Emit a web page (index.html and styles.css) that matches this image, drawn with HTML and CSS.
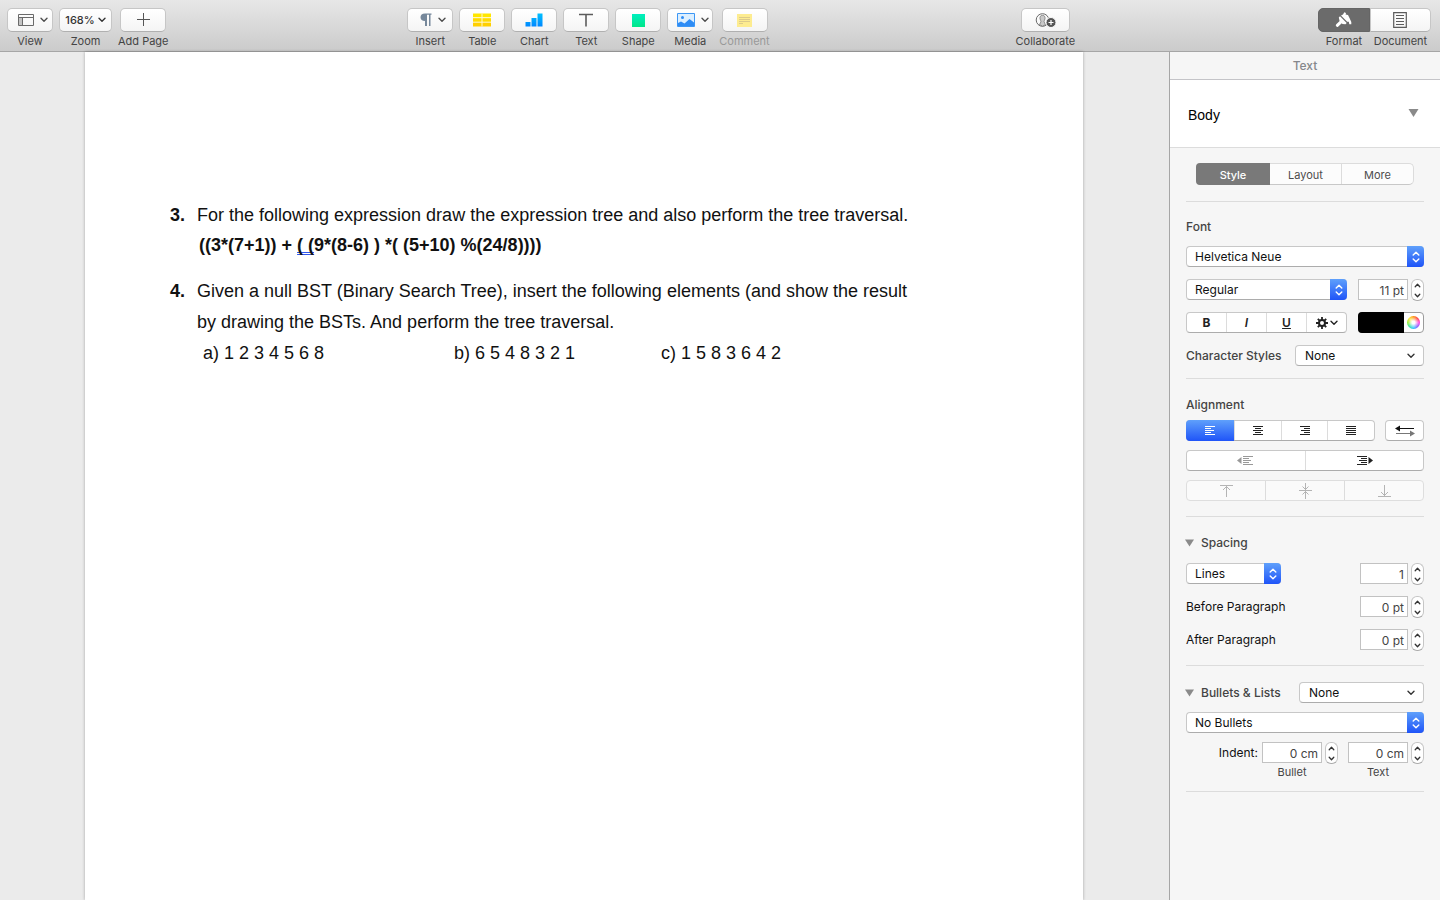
FILE: index.html
```html
<!DOCTYPE html>
<html lang="en">
<head>
    <meta charset="UTF-8">
    <meta name="viewport" content="width=device-width, initial-scale=1.0">
    <title>Document Editor</title>
    <link rel="stylesheet" href="styles.css">
</head>
<body>

<!-- shared icons -->
<svg class="symbols" aria-hidden="true">
    <symbol id="chevron" viewBox="0 0 8 6"><path d="M1 1.3l3 3 3-3" fill="none" stroke="currentColor" stroke-width="1.4" stroke-linecap="round" stroke-linejoin="round"/></symbol>
    <symbol id="updown" viewBox="0 0 8 12"><path d="M1.2 4L4 1.2 6.800 4M1.2 8L4 10.8 6.800 8" fill="none" stroke="currentColor" stroke-width="1.4" stroke-linecap="round" stroke-linejoin="round"/></symbol>
    <symbol id="step-up" viewBox="0 0 7 5"><path d="M1.200 3.700l2.300-2.400 2.300 2.400" fill="none" stroke="currentColor" stroke-width="1.3" stroke-linecap="round" stroke-linejoin="round"/></symbol>
    <symbol id="step-down" viewBox="0 0 7 5"><path d="M1.200 1.300l2.300 2.400 2.300-2.400" fill="none" stroke="currentColor" stroke-width="1.3" stroke-linecap="round" stroke-linejoin="round"/></symbol>
    <symbol id="triangle" viewBox="0 0 10 8"><path d="M0 0h10L5 8z" fill="currentColor"/></symbol>
</svg>

<header class="toolbar">
    <div class="tools">
        <div class="tool">
            <button class="tool-button with-menu" id="view" aria-labelledby="view-label">
                <svg width="16" height="12" viewBox="0 0 16 12"><path d="M1 3.500h4V11H1z" fill="#c4c4c4"/><path d="M.5.500h15v11H.5zM.5 3.500h15M4.500 3.500v8" fill="none" stroke="#6a6a6a"/></svg>
                <svg class="chevron"><use href="#chevron"/></svg>
            </button>
            <label for="view" id="view-label">View</label>
        </div>
        <div class="tool">
            <button class="tool-button zoom" id="zoom">168% <svg class="chevron"><use href="#chevron"/></svg></button>
            <label for="zoom">Zoom</label>
        </div>
        <div class="tool">
            <button class="tool-button" id="add" aria-labelledby="add-label">
                <svg width="14" height="14" viewBox="0 0 14 14"><path d="M7.500 0v13M1 6.500h13" stroke="#555"/></svg>
            </button>
            <label for="add" id="add-label">Add Page</label>
        </div>
    </div>

    <div class="tools insert-tools">
        <div class="tool">
            <button class="tool-button with-menu" id="insert">
                <svg width="12" height="14" viewBox="0 0 12 14"><path d="M5 8C2 8 .5 6.300.5 4.200S2 .500 5 .500h6.500v1.300H10.500V13H9V1.800H7V13H5z" fill="#76889b"/></svg>
                <svg class="chevron"><use href="#chevron"/></svg>
            </button>
            <label for="insert">Insert</label>
        </div>
        <div class="tool">
            <button class="tool-button" id="table">
                <svg width="18" height="14" viewBox="0 0 18 14"><path d="M0 .500h18v4H0z" fill="#ffe600"/><path d="M0 5h18v4H0z" fill="#ffdb00"/><path d="M0 9h18v4.500H0z" fill="#ffcf00"/><path d="M9 .500v13M0 4.700h18M0 9.200h18" stroke="#fff8cf"/></svg>
            </button>
            <label for="table">Table</label>
        </div>
        <div class="tool">
            <button class="tool-button" id="chart">
                <svg width="18" height="14" viewBox="0 0 18 14">
                    <linearGradient id="bars" gradientUnits="userSpaceOnUse" x1="0" y1="0" x2="0" y2="14"><stop stop-color="#00c3ff"/><stop offset="1" stop-color="#0084ff"/></linearGradient>
                    <path d="M.5 9h5v4.500h-5zM6.500 5h5v8.500h-5zM12.500 .500h5v13h-5z" fill="url(#bars)"/>
                </svg>
            </button>
            <label for="chart">Chart</label>
        </div>
        <div class="tool">
            <button class="tool-button" id="text">
                <svg width="14" height="14" viewBox="0 0 14 14"><path d="M0 1.500h14M7 1.500v12" stroke="#5c5c5c" stroke-width="1.600"/></svg>
            </button>
            <label for="text">Text</label>
        </div>
        <div class="tool">
            <button class="tool-button" id="shape">
                <svg width="13" height="13" viewBox="0 0 13 13">
                    <linearGradient id="green" x1="0" y1="0" x2="0" y2="1"><stop stop-color="#00efc0"/><stop offset="1" stop-color="#00e688"/></linearGradient>
                    <path d="M0 0h13v13H0z" fill="url(#green)"/>
                </svg>
            </button>
            <label for="shape">Shape</label>
        </div>
        <div class="tool">
            <button class="tool-button with-menu" id="media">
                <svg width="18" height="14" viewBox="0 0 18 14"><path d="M.5.500h17v13H.5z" fill="#dcefff" stroke="#3d97f5"/><path d="M1 10l3-1.500 3.500 2L12.500 6 17 9.500V13H1z" fill="#2e8cf5"/><circle cx="5.500" cy="4.500" r="1.500" fill="#2e8cf5"/></svg>
                <svg class="chevron"><use href="#chevron"/></svg>
            </button>
            <label for="media">Media</label>
        </div>
        <div class="tool disabled">
            <button class="tool-button" id="comment" disabled>
                <svg width="15" height="13" viewBox="0 0 15 13"><path d="M0 0h15v13H0z" fill="#fdec90"/><path d="M2 3.500h11M2 5.500h11M2 7.500h11M2 9.500h4" stroke="#dccb8c"/></svg>
            </button>
            <label for="comment">Comment</label>
        </div>
    </div>

    <div class="tools share-tools">
        <div class="tool">
            <button class="tool-button wide" id="collaborate">
                <svg width="21" height="15" viewBox="0 0 21 15">
                    <circle cx="7.500" cy="7" r="6.300" fill="none" stroke="#6a6a6a"/>
                    <path d="M7.500 2.300C5.500 2.300 4.700 3.800 5 5.800c.2 1.400 1 1.700 1 3L4.500 11.500 7.500 13.200l3-1.700L9 8.800c0-1.300.8-1.600 1-3 .3-2-.5-3.500-2.500-3.500z" fill="#c9c9c9" stroke="#777" stroke-width=".8"/>
                    <circle cx="16" cy="9.500" r="5" fill="#555" stroke="#fafafa"/>
                    <path d="M16 7v5M13.500 9.500h5" stroke="#fff" stroke-width="1.200"/>
                </svg>
            </button>
            <label for="collaborate">Collaborate</label>
        </div>
    </div>

    <div class="tools joined">
        <div class="tool">
            <button class="tool-button active" id="format">
                <svg width="17" height="16" viewBox="0 0 17 16"><path d="M2.300 13.300L6 9.800" stroke="#fff" stroke-width="3" stroke-linecap="round"/><path d="M3.800 5.500L5 4.300l6.700 6.700-1.200 1.200-3-.2L4.600 9zM6 3.600L8 2.500 9.300.300l1.700.7L10.600 2.500l2.400.5 1.500 3L16.300 10v2.200h-2L13.800 9.800h-1.600z" fill="#fff"/></svg>
            </button>
            <label for="format">Format</label>
        </div>
        <div class="tool">
            <button class="tool-button" id="document">
                <svg width="14" height="16" viewBox="0 0 14 16"><path d="M.7.700h12.600v14.600H.7z" fill="none" stroke="#5c5c5c" stroke-width="1.200"/><path d="M3 3.500h8M3 6.500h8M3 9.500h8M3 12.500h8" stroke="#5c5c5c"/></svg>
            </button>
            <label for="document">Document</label>
        </div>
    </div>
</header>

<div class="workspace">
    <main class="canvas">
        <article class="page">
            <section class="question">
                <b>3.</b>
                <div>
                    <p>For the following expression draw the expression tree and also perform the tree traversal.</p>
                    <p class="expression">((3*(7+1)) + <span class="grammar">( (</span>9*(8-6) ) *( (5+10) %(24/8))))</p>
                </div>
            </section>
            <section class="question">
                <b>4.</b>
                <div>
                    <p>Given a null BST (Binary Search Tree), insert the following elements (and show the result<br>by drawing the BSTs. And perform the tree traversal.</p>
                    <p class="options"><span>a) 1 2 3 4 5 6 8</span><span>b) 6 5 4 8 3 2 1</span><span>c) 1 5 8 3 6 4 2</span></p>
                </div>
            </section>
        </article>
    </main>

    <aside class="sidebar">
        <h1 class="sidebar-title">Text</h1>
        <button class="paragraph-style">Body <svg width="11" height="8"><use href="#triangle"/></svg></button>

        <div class="panel">
            <div class="tabs">
                <button class="active">Style</button>
                <button>Layout</button>
                <button>More</button>
            </div>

            <section class="group font">
                <h2>Font</h2>
                <div class="row">
                    <span class="popup fill"><select aria-label="Font family"><option>Helvetica Neue</option></select><i><svg><use href="#updown"/></svg></i></span>
                </div>
                <div class="row">
                    <span class="popup fill"><select aria-label="Typeface"><option>Regular</option></select><i><svg><use href="#updown"/></svg></i></span>
                    <span class="number size">
                        <input type="text" value="11 pt" aria-label="Font size">
                        <span class="stepper"><button aria-label="Increase"><svg><use href="#step-up"/></svg></button><button aria-label="Decrease"><svg><use href="#step-down"/></svg></button></span>
                    </span>
                </div>
                <div class="row">
                    <div class="segments fill">
                        <button class="bold">B</button>
                        <button class="italic">I</button>
                        <button class="underline">U</button>
                        <button aria-label="Advanced options">
                            <svg width="14" height="12" viewBox="-1 0 14 12"><circle cx="6" cy="6" r="3" fill="none" stroke="#222" stroke-width="2"/><path d="M6 0v3M6 9v3M0 6h3M9 6h3M1.800 1.800l2 2M8.200 8.200l2 2M10.200 1.800l-2 2M3.800 8.200l-2 2" stroke="#222" stroke-width="1.800"/></svg>
                            <svg class="chevron"><use href="#chevron"/></svg>
                        </button>
                    </div>
                    <div class="color-well">
                        <button class="swatch" aria-label="Text color"></button>
                        <button class="wheel" aria-label="Color wheel"><i></i></button>
                    </div>
                </div>
                <div class="row">
                    <label class="strong" for="char-style">Character Styles</label>
                    <span class="dropdown char-style"><select id="char-style"><option>None</option></select><svg class="chevron"><use href="#chevron"/></svg></span>
                </div>
            </section>

            <section class="group tight alignment">
                <h2>Alignment</h2>
                <div class="row">
                    <div class="segments fill align">
                        <button class="active" aria-label="Align left"><svg width="12" height="10" viewBox="0 0 12 10"><path d="M1 .500h10M1 2.500h6M1 4.500h9M1 6.500h6M1 8.500h10" stroke="currentColor"/></svg></button>
                        <button aria-label="Align center"><svg width="12" height="10" viewBox="0 0 12 10"><path d="M1 .500h10M3 2.500h6M1 4.500h10M3 6.500h6M1 8.500h10" stroke="currentColor"/></svg></button>
                        <button aria-label="Align right"><svg width="12" height="10" viewBox="0 0 12 10"><path d="M1 .500h10M5 2.500h6M2 4.500h9M5 6.500h6M1 8.500h10" stroke="currentColor"/></svg></button>
                        <button aria-label="Justify"><svg width="12" height="10" viewBox="0 0 12 10"><path d="M1 .500h10M1 2.500h10M1 4.500h10M1 6.500h10M1 8.500h10" stroke="currentColor"/></svg></button>
                    </div>
                    <div class="segments direction">
                        <button aria-label="Text direction"><svg width="20" height="12" viewBox="0 0 20 12"><path d="M3 3.500h16" stroke="#111"/><path d="M0 3.500l5-3v6z" fill="#111"/><path d="M1 8.500h16" stroke="#777"/><path d="M20 8.500l-5-3v6z" fill="#777"/></svg></button>
                    </div>
                </div>
                <div class="row">
                    <div class="segments fill">
                        <button aria-label="Decrease indent" class="dim"><svg width="18" height="10" viewBox="0 0 18 10"><path d="M6 .500h10M6 2.500h6M6 4.500h8M6 6.500h6M6 8.500h10" stroke="currentColor"/><path d="M4.500 1v7L0 4.500z" fill="currentColor"/></svg></button>
                        <button aria-label="Increase indent"><svg width="18" height="10" viewBox="0 0 18 10"><path d="M2 .500h10M6 2.500h6M4 4.500h8M6 6.500h6M2 8.500h10" stroke="currentColor"/><path d="M13.500 1v7L18 4.500z" fill="currentColor"/></svg></button>
                    </div>
                </div>
                <div class="row">
                    <div class="segments fill off">
                        <button disabled aria-label="Align top"><svg width="13" height="12" viewBox="0 0 13 12"><path d="M0 .500h13M6.500 1v11M3 5l3.500-3.500L10 5" fill="none" stroke="currentColor"/></svg></button>
                        <button disabled aria-label="Align middle"><svg width="13" height="16" viewBox="0 0 13 16"><path d="M0 7.500h13M6.500 0v16M3.500 3.500l3 3 3-3M3.500 11.500l3-3 3 3" fill="none" stroke="currentColor"/></svg></button>
                        <button disabled aria-label="Align bottom"><svg width="13" height="12" viewBox="0 0 13 12"><path d="M0 11.500h13M6.500 0v11M3 7l3.500 3.500L10 7" fill="none" stroke="currentColor"/></svg></button>
                    </div>
                </div>
            </section>

            <section class="group spacing">
                <h2><svg class="disclosure"><use href="#triangle"/></svg>Spacing</h2>
                <div class="row">
                    <span class="popup lines"><select aria-label="Line spacing"><option>Lines</option></select><i><svg><use href="#updown"/></svg></i></span>
                    <span class="number">
                        <input type="text" value="1" aria-label="Spacing value">
                        <span class="stepper"><button aria-label="Increase"><svg><use href="#step-up"/></svg></button><button aria-label="Decrease"><svg><use href="#step-down"/></svg></button></span>
                    </span>
                </div>
                <div class="row">
                    <label for="before">Before Paragraph</label>
                    <span class="number">
                        <input type="text" value="0 pt" id="before">
                        <span class="stepper"><button aria-label="Increase"><svg><use href="#step-up"/></svg></button><button aria-label="Decrease"><svg><use href="#step-down"/></svg></button></span>
                    </span>
                </div>
                <div class="row">
                    <label for="after">After Paragraph</label>
                    <span class="number">
                        <input type="text" value="0 pt" id="after">
                        <span class="stepper"><button aria-label="Increase"><svg><use href="#step-up"/></svg></button><button aria-label="Decrease"><svg><use href="#step-down"/></svg></button></span>
                    </span>
                </div>
            </section>

            <section class="group tight bullets">
                <div class="row">
                    <h2><svg class="disclosure"><use href="#triangle"/></svg><label for="list-style">Bullets &amp; Lists</label></h2>
                    <span class="dropdown list-style"><select id="list-style"><option>None</option></select><svg class="chevron"><use href="#chevron"/></svg></span>
                </div>
                <div class="row">
                    <span class="popup fill"><select aria-label="Bullet type"><option>No Bullets</option></select><i><svg><use href="#updown"/></svg></i></span>
                </div>
                <div class="indent">
                    <span>Indent:</span>
                    <span class="number">
                        <input type="text" value="0 cm" id="indent-bullet">
                        <span class="stepper"><button aria-label="Increase"><svg><use href="#step-up"/></svg></button><button aria-label="Decrease"><svg><use href="#step-down"/></svg></button></span>
                        <label for="indent-bullet">Bullet</label>
                    </span>
                    <span class="number">
                        <input type="text" value="0 cm" id="indent-text">
                        <span class="stepper"><button aria-label="Increase"><svg><use href="#step-up"/></svg></button><button aria-label="Decrease"><svg><use href="#step-down"/></svg></button></span>
                        <label for="indent-text">Text</label>
                    </span>
                </div>
            </section>
        </div>
    </aside>
</div>

</body>
</html>
```

FILE: styles.css
```css
* {
    box-sizing: border-box;
}
body {
    display: flex;
    flex-direction: column;
    height: 100vh;
    margin: 0;
    overflow: hidden;
    font-family: Inter, "Liberation Sans", sans-serif;
    font-size: 12px;
    line-height: 16px;
    color: #111;
}
button, input, select {
    margin: 0;
    padding: 0;
    border: 0;
    background: none;
    font: inherit;
    color: inherit;
}
h1, h2, p {
    margin: 0;
}
svg {
    flex: none;
    display: block;
}
.symbols {
    display: none;
}
.chevron {
    width: 8px;
    height: 6px;
}

/* Toolbar */
.toolbar {
    display: flex;
    justify-content: space-between;
    height: 52px;
    padding: 8px 9px 0 7px;
    border-bottom: 1px solid #a6a6a6;
    background: linear-gradient(#e7e7e7, #cbcbcb);
}
.tools {
    display: flex;
    gap: 6px;
}
.insert-tools {
    margin-right: 7px;
}
.share-tools {
    margin-right: 4px;
}
.tool {
    display: flex;
    flex-direction: column;
    align-items: center;
    min-width: 46px;
    font-size: 11px;
    color: #444;
}
.tool label {
    padding-top: 1px;
}
.tool-button {
    display: flex;
    align-items: center;
    justify-content: center;
    gap: 6px;
    width: 46px;
    height: 24px;
    border: 1px solid #c6c6c6;
    border-bottom-color: #b0b0b0;
    border-radius: 5px;
    background: linear-gradient(#fff, #f4f4f4);
    color: #4c4c4c;
}
.tool-button.with-menu {
    padding-left: 5px;
}
.tool-button.zoom {
    gap: 3px;
    width: 53px;
    font-weight: 500;
    color: #333;
}
.tool-button.wide {
    width: 49px;
}
.tool.disabled {
    color: #999;
}
.joined {
    gap: 0;
}
.joined .tool {
    width: 52px;
}
.joined .tool + .tool {
    width: 61px;
}
.joined .tool-button {
    width: 100%;
    border-radius: 0 5px 5px 0;
}
.joined .active {
    border-color: #656565;
    border-radius: 5px 0 0 5px;
    background: #6b6b6b;
}

/* Document */
.workspace {
    display: flex;
    flex: 1;
    min-height: 0;
}
.canvas {
    display: flex;
    flex: 1;
    padding: 0 86px 0 85px;
    background: #ebebeb;
}
.page {
    flex: 1;
    padding: 148px 85px;
    background: #fff;
    box-shadow: 0 0 3px rgba(0, 0, 0, 0.3);
    font-family: "Liberation Sans", Arial, sans-serif;
    font-size: 18px;
    line-height: 31px;
}
.question {
    display: flex;
    margin-bottom: 17px;
    white-space: nowrap;
}
.question b {
    width: 27px;
}
.expression {
    padding-left: 2px;
    font-weight: bold;
    line-height: 28px;
}
.grammar {
    text-decoration-line: underline;
    text-decoration-style: double;
    text-decoration-color: #2f55ee;
    text-decoration-thickness: 1px;
    text-decoration-skip-ink: none;
    text-underline-offset: 1px;
}
.options {
    display: grid;
    grid-template-columns: 251px 207px auto;
    padding-left: 6px;
}

/* Sidebar */
.sidebar {
    width: 271px;
    border-left: 1px solid #a6a6a6;
    background: #f6f6f6;
}
.sidebar-title {
    padding: 6px 0 5px;
    border-bottom: 1px solid #c4c4c8;
    font-size: 12px;
    font-weight: 500;
    text-align: center;
    color: #85888c;
}
.paragraph-style {
    display: flex;
    align-items: center;
    justify-content: space-between;
    width: 100%;
    height: 68px;
    padding: 3px 21px 0 18px;
    border-bottom: 1px solid #dcdcdc;
    background: #fff;
    font-family: "Liberation Sans", Arial, sans-serif;
    font-size: 14px;
    color: #000;
}
.paragraph-style svg {
    margin-bottom: 4px;
    color: #8a8a8a;
}
.panel {
    padding: 15px 16px;
}
.panel button {
    display: flex;
    align-items: center;
    justify-content: center;
}
.tabs {
    display: flex;
    margin: 0 10px 16px;
    border: 1px solid #dcdcdc;
    border-bottom-color: #c8c8c8;
    border-radius: 5px;
    background: #fcfcfc;
    font-size: 11px;
    color: #4c4c4c;
}
.tabs button {
    flex: 1;
    height: 20px;
    padding-top: 2px;
}
.tabs button + button + button {
    border-left: 1px solid #dcdcdc;
}
.tabs .active {
    min-width: 74px;
    height: 22px;
    margin: -1px 0 -1px -1px;
    border-radius: 4px 0 0 4px;
    background: #797979;
    color: #fff;
    font-weight: 500;
}
.group {
    display: flex;
    flex-direction: column;
    gap: 12px;
    border-top: 1px solid #dcdcdc;
}
.group.tight {
    gap: 9px;
}
.font {
    padding: 17px 0 12px;
}
.alignment {
    padding: 18px 0 15px;
}
.spacing {
    padding: 18px 0 15px;
}
.bullets {
    padding: 16px 0 11px;
    border-bottom: 1px solid #dcdcdc;
}
h2 {
    display: flex;
    align-items: center;
    font-size: 12px;
    font-weight: 500;
    color: #444;
}
.font h2 {
    margin-bottom: -1px;
}
.alignment h2 {
    margin-bottom: -2px;
}
.disclosure {
    width: 9px;
    height: 8px;
    margin: 0 7px 0 -1px;
    color: #8a8a8a;
}
.row {
    display: flex;
    align-items: center;
    justify-content: space-between;
    height: 21px;
}
.fill {
    flex: 1;
}
.strong {
    font-weight: 500;
    color: #444;
}

/* Selects keep the arrow in the same grid cell */
.popup, .dropdown {
    display: grid;
    align-items: center;
    height: 21px;
    border: 1px solid #c8c8c8;
    border-bottom-color: #acacac;
    border-radius: 4px;
    background: #fff;
}
.popup > *, .dropdown > * {
    grid-area: 1 / 1;
}
select {
    width: 100%;
    height: 19px;
    padding-left: 8px;
    appearance: none;
}
.popup {
    border-right: 0;
}
.popup i {
    display: flex;
    align-items: center;
    justify-content: center;
    justify-self: end;
    width: 17px;
    height: 21px;
    margin: -1px 0;
    border-radius: 0 4px 4px 0;
    background: linear-gradient(#5fa0fb, #1f54f8);
    color: #fff;
    pointer-events: none;
}
.popup i svg {
    width: 8px;
    height: 12px;
}
.dropdown select {
    padding-left: 9px;
}
.dropdown .chevron {
    justify-self: end;
    margin-right: 8px;
    pointer-events: none;
    color: #333;
}
.char-style {
    width: 129px;
}
.list-style {
    width: 125px;
}
.lines {
    width: 95px;
}

/* Number fields */
.number {
    display: grid;
    grid-template-columns: 48px 13px;
    column-gap: 3px;
}
.number.size {
    grid-template-columns: 50px 13px;
    margin-left: 11px;
}
.number input {
    width: 100%;
    height: 21px;
    padding: 2px 3px 0 0;
    border: 1px solid #c2c2c2;
    background: #fff;
    text-align: right;
    color: #444;
}
.row .stepper {
    margin-bottom: -1px;
}
.stepper {
    display: flex;
    flex-direction: column;
    height: 22px;
    border: 1px solid #c6c6c6;
    border-bottom-color: #acacac;
    border-radius: 6px;
    background: #fff;
    color: #333;
}
.stepper button {
    flex: 1;
}
.stepper svg {
    width: 7px;
    height: 5px;
}

/* Segmented buttons */
.segments {
    display: flex;
    height: 21px;
    border: 1px solid #c8c8c8;
    border-bottom-color: #acacac;
    border-radius: 4px;
    background: #fff;
    color: #222;
}
.segments button {
    flex: 1;
    gap: 1px;
}
.segments button + button {
    border-left: 1px solid #dcdcdc;
}
.segments .bold {
    font-weight: 700;
}
.segments .italic {
    font-style: italic;
    font-weight: 600;
}
.segments .underline {
    font-weight: 600;
    text-decoration: underline;
}
.segments .dim {
    color: #999;
}
.segments.off {
    border-color: #dedede;
    background: #fafafa;
    color: #b4b4b4;
}
.segments .active {
    min-width: 48px;
    margin: -1px 0 -1px -1px;
    border-radius: 4px 0 0 4px;
    background: linear-gradient(#5fa0fb, #1f54f8);
    color: #fff;
}
.direction {
    width: 39px;
    margin-left: 10px;
}
.color-well {
    display: flex;
    width: 66px;
    height: 21px;
    margin-left: 11px;
    border: 1px solid #9c9c9c;
    border-radius: 4px;
    background: #fff;
}
.color-well .swatch {
    width: 46px;
    margin: -1px 0 -1px -1px;
    border-radius: 4px 0 0 4px;
    background: #000;
}
.color-well .wheel {
    flex: 1;
}
.wheel i {
    width: 13px;
    height: 13px;
    border-radius: 50%;
    background: radial-gradient(#fff 15%, rgba(255, 255, 255, 0) 70%), conic-gradient(#ff8a00, #ff3030, #ff30e0, #7a50ff, #20c0ff, #20e0a0, #90f020, #ffe020, #ff8a00);
}

/* Bullets */
.indent {
    display: flex;
    justify-content: flex-end;
    line-height: 21px;
}
.indent .number {
    grid-template-columns: 60px 13px;
    margin-left: 10px;
}
.indent span:first-child + .number {
    margin-left: 4px;
}
.indent label {
    font-size: 11px;
    line-height: 16px;
    text-align: center;
    color: #444;
}
```
